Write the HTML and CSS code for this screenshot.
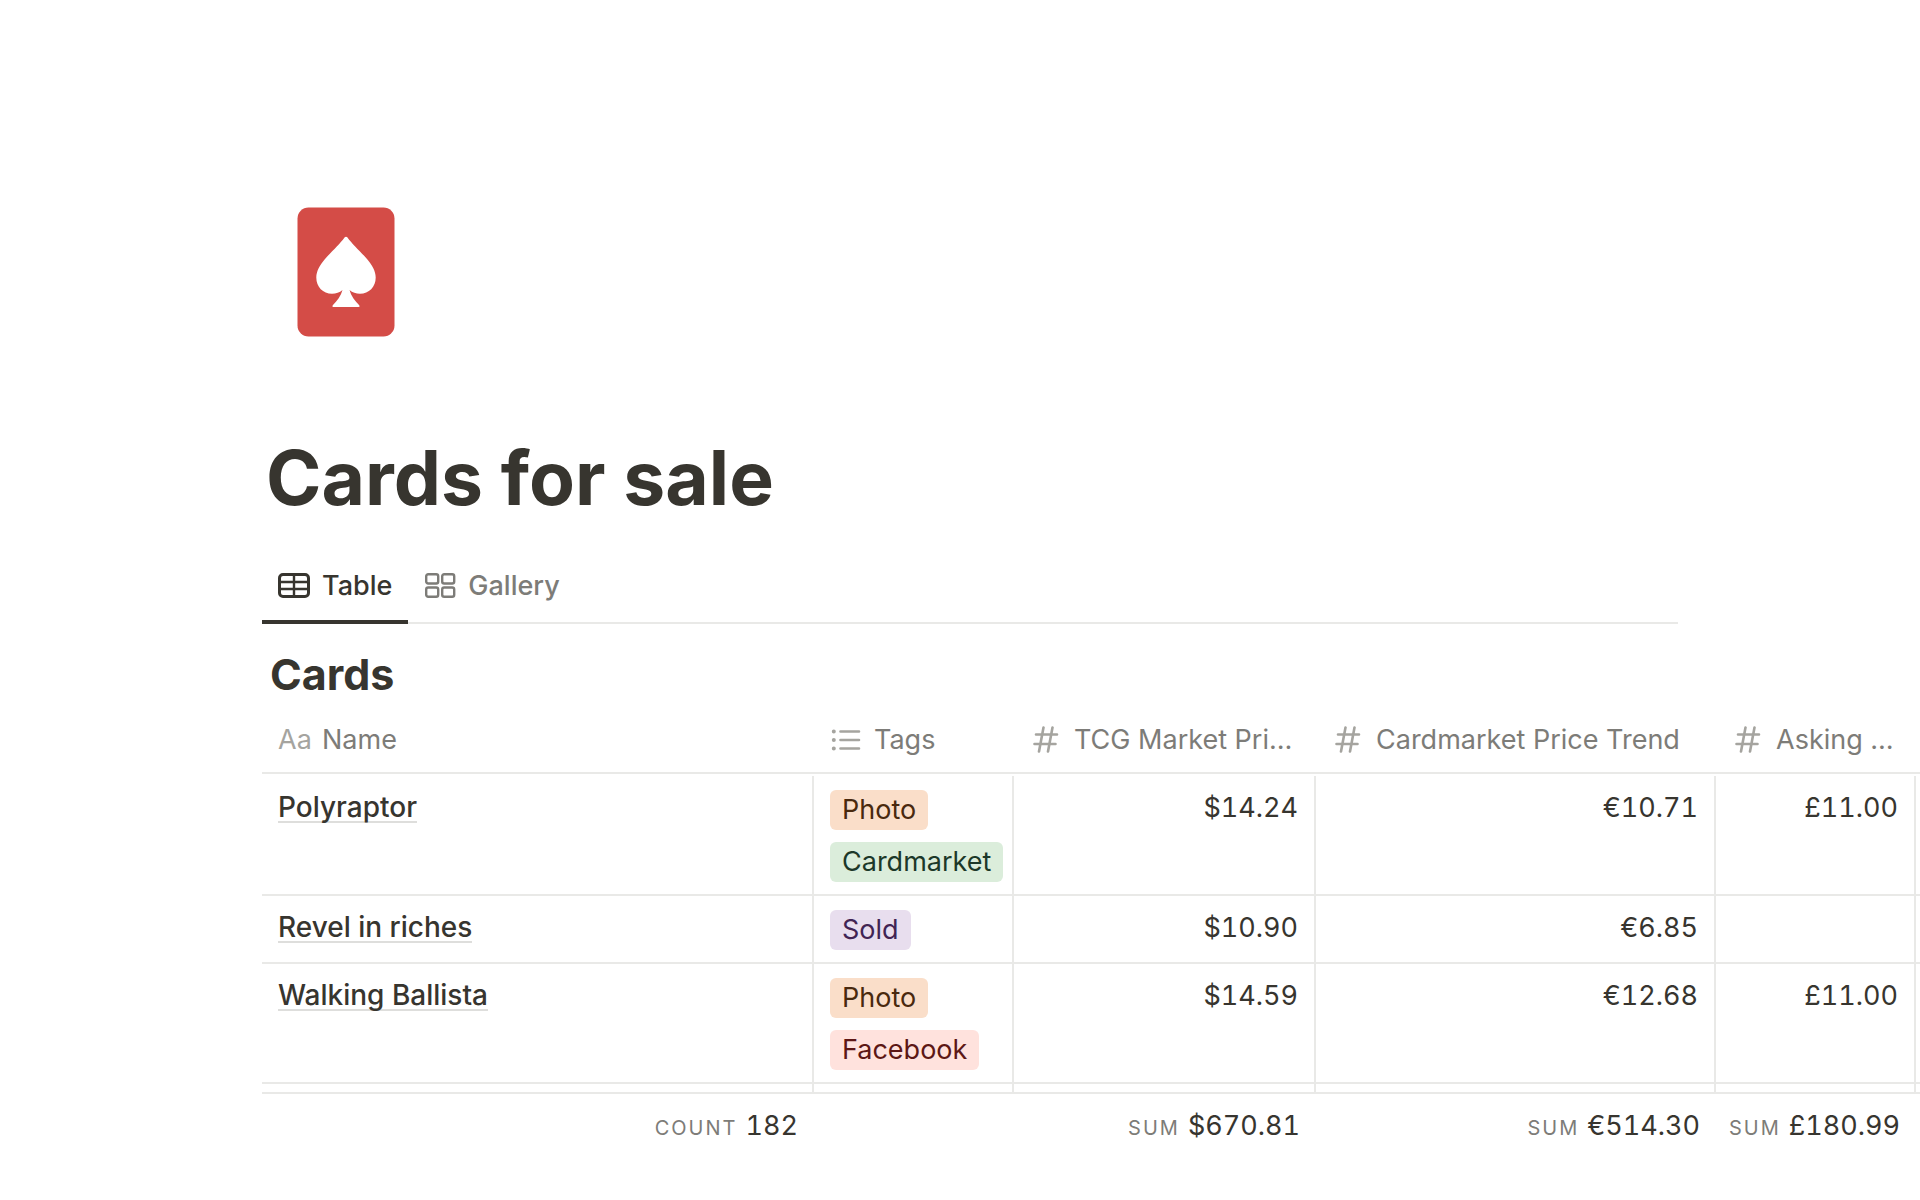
FILE: index.html
```html
<!DOCTYPE html>
<html lang="en">
<head>
    <meta charset="UTF-8">
    <meta name="viewport" content="width=device-width, initial-scale=1.0">
    <title>Cards for sale</title>
    <link rel="stylesheet" href="styles.css">
</head>
<body>
    <!-- Shared hash icon for the number columns -->
    <svg class="sprite" aria-hidden="true">
        <symbol id="hash" viewBox="0 0 28 28">
            <path d="M11.500 1.500 L7 25.500 M20.500 1.500 L16 25.500 M4 8.500 H25 M2.500 18 H23.500" fill="none" stroke="currentColor" stroke-width="2.600" stroke-linecap="round"/>
        </symbol>
    </svg>
    <main class="page">
        <header class="page-header">
            <svg class="page-icon" viewBox="0 0 156 156" role="img" aria-label="Spade card">
                <rect x="29.500" y="13.500" width="97" height="129" rx="11" fill="#d44c47"/>
                <path d="M76.500 43.500 Q78 42 79.500 43.500 C84 50 93 58 99 65 C104 71 107.700 77 107.700 83.500 C107.700 93 101 99.700 92 99.700 C88 99.700 84.500 98.500 81.500 96 C83 102 87 107 91 111 Q92.500 113 90.500 113 H65.500 Q63.500 113 65 111 C69 107 73 102 74.500 96 C71.500 98.500 68 99.700 64 99.700 C55 99.700 48.300 93 48.300 83.500 C48.300 77 52 71 57 65 C63 58 72 50 76.500 43.500 Z" fill="#fff"/>
            </svg>
            <h1>Cards for sale</h1>
        </header>

        <nav class="tabs">
            <button class="tab active" type="button">
                <svg class="tab-icon" viewBox="0 0 32 28" fill="none" stroke="currentColor">
                    <rect x="1.500" y="2.500" width="29" height="22" rx="3.500" stroke-width="3"/>
                    <path d="M16 2 V25 M1 10 H31 M1 17 H31" stroke-width="2.400"/>
                </svg>
                Table
            </button>
            <button class="tab" type="button">
                <svg class="tab-icon" viewBox="0 0 32 28" fill="none" stroke="currentColor" stroke-width="2.400">
                    <rect x="2.200" y="2.200" width="12" height="9.300" rx="2"/>
                    <rect x="18.200" y="2.200" width="12" height="9.300" rx="2"/>
                    <rect x="2.200" y="15.500" width="12" height="9.300" rx="2"/>
                    <rect x="18.200" y="15.500" width="12" height="9.300" rx="2"/>
                </svg>
                Gallery
            </button>
        </nav>

        <h2>Cards</h2>

        <table class="cards">
            <colgroup>
                <col class="col-name">
                <col class="col-tags">
                <col class="col-tcg">
                <col class="col-trend">
                <col class="col-asking">
                <col>
            </colgroup>
            <thead>
                <tr>
                    <th><div class="head"><span class="head-icon">Aa</span><span class="label">Name</span></div></th>
                    <th>
                        <div class="head">
                            <svg class="head-icon" viewBox="0 0 32 28" fill="none" stroke="currentColor" stroke-width="2.600" stroke-linecap="round">
                                <path d="M10.500 5.500 H29 M10.500 14 H29 M10.500 22.500 H29"/>
                                <path d="M3.800 5.500 h.01 M3.800 14 h.01 M3.800 22.500 h.01" stroke-width="4"/>
                            </svg>
                            <span class="label">Tags</span>
                        </div>
                    </th>
                    <th><div class="head"><svg class="head-icon"><use href="#hash"/></svg><span class="label">TCG Market Price</span></div></th>
                    <th><div class="head"><svg class="head-icon"><use href="#hash"/></svg><span class="label">Cardmarket Price Trend</span></div></th>
                    <th><div class="head"><svg class="head-icon"><use href="#hash"/></svg><span class="label">Asking Price</span></div></th>
                    <th></th>
                </tr>
            </thead>
            <tbody>
                <tr class="gap"><td colspan="6"></td></tr>
                <tr>
                    <td><a class="title" href="#">Polyraptor</a></td>
                    <td><div class="tags"><span class="tag orange">Photo</span><span class="tag green">Cardmarket</span></div></td>
                    <td class="number">$14.24</td>
                    <td class="number">€10.71</td>
                    <td class="number">£11.00</td>
                    <td></td>
                </tr>
                <tr>
                    <td><a class="title" href="#">Revel in riches</a></td>
                    <td><div class="tags"><span class="tag purple">Sold</span></div></td>
                    <td class="number">$10.90</td>
                    <td class="number">€6.85</td>
                    <td class="number"></td>
                    <td></td>
                </tr>
                <tr>
                    <td><a class="title" href="#">Walking Ballista</a></td>
                    <td><div class="tags"><span class="tag orange">Photo</span><span class="tag red">Facebook</span></div></td>
                    <td class="number">$14.59</td>
                    <td class="number">€12.68</td>
                    <td class="number">£11.00</td>
                    <td></td>
                </tr>
                <tr class="cut">
                    <td></td><td></td><td></td><td></td><td></td><td></td>
                </tr>
            </tbody>
            <tfoot>
                <tr>
                    <td><span class="calc">COUNT</span>182</td>
                    <td></td>
                    <td><span class="calc">SUM</span>$670.81</td>
                    <td><span class="calc">SUM</span>€514.30</td>
                    <td><span class="calc">SUM</span>£180.99</td>
                    <td></td>
                </tr>
            </tfoot>
        </table>
    </main>
</body>
</html>
```

FILE: styles.css
```css
* {
    box-sizing: border-box;
}

body {
    margin: 0;
    background-color: #ffffff;
    color: #37352f;
    font-family: Inter, "Liberation Sans", sans-serif;
    font-size: 27px;
    line-height: 40px;
    overflow-x: hidden;
}

.sprite {
    display: none;
}

.page {
    padding: 194px 0 0 262px;
}

.page-icon {
    display: block;
    width: 156px;
    height: 156px;
    margin-left: 6px;
}

h1 {
    margin: 80px 0 0 4px;
    font-size: 75px;
    line-height: 96px;
    font-weight: 700;
}

/* View tabs */
.tabs {
    display: flex;
    height: 80px;
    margin: 18px 242px 0 0;
    border-bottom: 2px solid #e9e9e7;
}

.tab {
    display: flex;
    align-items: center;
    gap: 12px;
    height: 80px;
    padding: 8px 16px 0;
    border: none;
    border-bottom: 4px solid transparent;
    background: none;
    color: #7d7c78;
    font: inherit;
    font-weight: 500;
    cursor: pointer;
}

.tab.active {
    color: #37352f;
    border-bottom-color: #37352f;
}

.tab-icon {
    width: 32px;
    height: 28px;
}

h2 {
    margin: 20px 0 0 8px;
    font-size: 43px;
    line-height: 60px;
    font-weight: 700;
}

/* Cards table */
.cards {
    width: 100%;
    table-layout: fixed;
    border-spacing: 0;
}

.col-name { width: 552px; }
.col-tags { width: 200px; }
.col-tcg { width: 302px; }
.col-trend { width: 400px; }
.col-asking { width: 200px; }

th {
    height: 70px;
    padding: 4px 16px 0;
    border-bottom: 2px solid #e9e9e7;
    color: #7d7c78;
    font-weight: 400;
    text-align: left;
}

.head {
    display: flex;
    align-items: center;
    gap: 12px;
}

.head-icon {
    flex: none;
    width: 32px;
    height: 28px;
    color: #a5a49f;
    line-height: 28px;
}

.label {
    overflow: hidden;
    white-space: nowrap;
    text-overflow: ellipsis;
}

td {
    padding: 14px 16px 12px;
    border-right: 2px solid #e9e9e7;
    border-bottom: 2px solid #e9e9e7;
    vertical-align: top;
}

td:last-child {
    border-right: none;
}

.gap td {
    height: 2px;
    padding: 0;
    border: none;
}

.cut td {
    height: 10px;
    padding: 0;
}

.title {
    display: block;
    width: fit-content;
    margin-top: 3px;
    border-bottom: 2px solid #dededc;
    color: inherit;
    font-size: 28px;
    font-weight: 500;
    line-height: 28px;
    text-decoration: none;
}

.number {
    font-variant-numeric: tabular-nums;
    line-height: 36px;
    text-align: right;
}

.tags {
    display: flex;
    flex-direction: column;
    align-items: flex-start;
    gap: 12px;
}

.tag {
    padding: 0 12px;
    border-radius: 6px;
}

.orange { background-color: #fadec9; color: #49290e; }
.green { background-color: #dbeddb; color: #1c3829; }
.purple { background-color: #e8deee; color: #412454; }
.red { background-color: #ffe2dd; color: #5d1715; }

tfoot td {
    height: 66px;
    padding: 0 16px 0 0;
    border: none;
    font-variant-numeric: tabular-nums;
    text-align: right;
    vertical-align: middle;
    white-space: nowrap;
}

.calc {
    margin-right: 8px;
    color: #7d7c78;
    font-size: 20px;
    letter-spacing: 2px;
}
```
